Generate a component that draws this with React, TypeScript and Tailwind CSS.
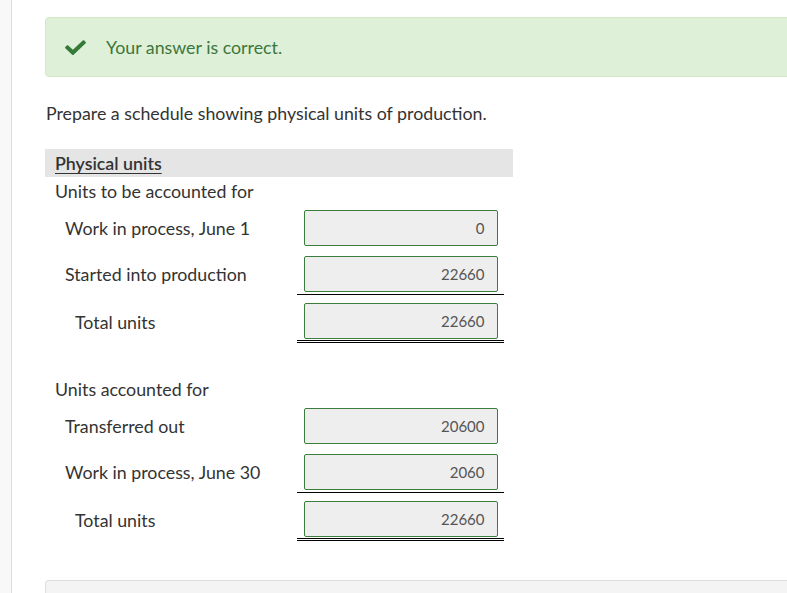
import React from "react";

const font = { fontFamily: "Lato, 'Open Sans', sans-serif" };

function Field({ value }: { value: string }) {
  return (
    <div className="h-[36px] w-[194px] rounded-[2px] border border-[#3c7d3c] bg-[#eeeeee] flex items-center justify-end pr-[12px] text-[15px] text-[#555555]">
      {value}
    </div>
  );
}

function Row({
  label,
  value,
  indent,
  variant,
}: {
  label: string;
  value: string;
  indent: string;
  variant: "plain" | "single" | "double";
}) {
  const cell =
    variant === "plain"
      ? "pt-[5px] pb-[5px]"
      : variant === "single"
      ? "pt-[5px] pb-[2px] border-b border-black"
      : "pt-[8px] pb-[1px] border-b-[3px] border-double border-black";
  const lab = variant === "double" ? "pt-[6px]" : variant === "single" ? "pt-[2px]" : "";
  return (
    <div className="flex">
      <div className={`w-[252px] flex items-center ${indent} ${lab} text-[17.8px] text-[#333333]`}>{label}</div>
      <div className={`w-[207px] flex justify-center ${cell}`}>
        <Field value={value} />
      </div>
    </div>
  );
}

export default function App() {
  return (
    <div className="flex min-h-[593px] w-[787px] overflow-hidden bg-white" style={font}>
      <div className="w-[12px] shrink-0 bg-[#f8f8f8] border-r border-[#dddddd]" />
      <div className="flex-1 pl-[33px] pt-[17px] min-w-0">
        <div className="w-[760px] h-[60px] rounded-[4px] border border-[#d4e8c8] bg-[#dff0d8] flex items-center pl-[19px]">
          <svg width="21" height="17" viewBox="0 0 512 440" preserveAspectRatio="none" className="mr-[20px] fill-[#357a38]">
            <path d="M173.898 407.404l-166.4-166.4c-9.997-9.997-9.997-26.206 0-36.204l36.203-36.204c9.997-9.998 26.207-9.998 36.204 0L192 280.69 432.095 40.596c9.997-9.997 26.207-9.997 36.204 0l36.203 36.204c9.997 9.997 9.997 26.206 0 36.204l-294.4 294.401c-9.998 9.997-26.207 9.997-36.204-.001z" />
          </svg>
          <span className="text-[17.8px] text-[#3c763d]">Your answer is correct.</span>
        </div>
        <p className="mt-[24px] pl-[1px] text-[17.8px] text-[#333333] leading-[24px]">
          Prepare a schedule showing physical units of production.
        </p>
        <div className="mt-[24px] w-[468px]">
          <div className="h-[28px] bg-[#e5e5e5] flex items-center pl-[10px] text-[17.8px] font-semibold text-[#333333]">
            <span className="underline underline-offset-[3px]">Physical units</span>
          </div>
          <div className="h-[28px] flex items-center pl-[10px] text-[17.8px] text-[#333333]">Units to be accounted for</div>
          <Row label="Work in process, June 1" value="0" indent="pl-[20px]" variant="plain" />
          <Row label="Started into production" value="22660" indent="pl-[20px]" variant="single" />
          <Row label="Total units" value="22660" indent="pl-[30px]" variant="double" />
          <div className="h-[32px]" />
          <div className="h-[28px] flex items-center pl-[10px] text-[17.8px] text-[#333333]">Units accounted for</div>
          <Row label="Transferred out" value="20600" indent="pl-[20px]" variant="plain" />
          <Row label="Work in process, June 30" value="2060" indent="pl-[20px]" variant="single" />
          <Row label="Total units" value="22660" indent="pl-[30px]" variant="double" />
        </div>
        <div className="mt-[39px] w-[760px] h-[40px] rounded-t-[4px] border-t border-l border-[#dddddd] bg-[#f4f4f4]" />
      </div>
    </div>
  );
}
